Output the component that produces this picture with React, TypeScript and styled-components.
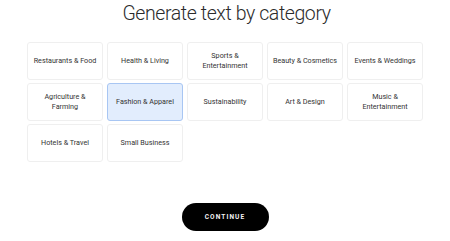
import styled, { createGlobalStyle } from "styled-components";

const GlobalStyle = createGlobalStyle`
  html, body {
    margin: 0;
    padding: 0;
    background: #ffffff;
  }
  body {
    font-family: Roboto, "Liberation Sans", sans-serif;
  }
`;

const Page = styled.div`
  width: 450px;
  height: 241px;
  display: flex;
  flex-direction: column;
  align-items: center;
  overflow: hidden;
`;

const Title = styled.h1`
  margin: 0;
  padding-top: 2px;
  padding-left: 3px;
  font-size: 19.5px;
  font-weight: 300;
  line-height: 24px;
  letter-spacing: -0.4px;
  color: #2b2b2b;
  text-align: center;
`;

const Grid = styled.div`
  margin-top: 16px;
  display: grid;
  grid-template-columns: repeat(5, 76px);
  grid-auto-rows: 38px;
  column-gap: 4px;
  row-gap: 3px;
`;

const Card = styled.button<{ $selected?: boolean }>`
  box-sizing: border-box;
  display: flex;
  align-items: center;
  justify-content: center;
  padding: 0 4px;
  border-radius: 3px;
  border: 1px solid ${({ $selected }) => ($selected ? "#a8c6f3" : "#efefef")};
  background: ${({ $selected }) => ($selected ? "#e2edfd" : "#ffffff")};
  font-family: Roboto, "Liberation Sans", sans-serif;
  font-size: 7.2px;
  line-height: 10px;
  color: #333333;
  text-align: center;
  cursor: pointer;
`;

const Continue = styled.button`
  margin-top: 41px;
  width: 87px;
  height: 28px;
  border: none;
  border-radius: 14px;
  background: #000000;
  color: #f2f2f2;
  font-family: Roboto, "Liberation Sans", sans-serif;
  font-size: 6.5px;
  font-weight: 700;
  letter-spacing: 1.1px;
  cursor: pointer;
`;

const categories = [
  "Restaurants & Food",
  "Health & Living",
  "Sports & Entertainment",
  "Beauty & Cosmetics",
  "Events & Weddings",
  "Agriculture & Farming",
  "Fashion & Apparel",
  "Sustainability",
  "Art & Design",
  "Music & Entertainment",
  "Hotels & Travel",
  "Small Business",
];

export default function App() {
  return (
    <>
      <GlobalStyle />
      <Page>
        <Title>Generate text by category</Title>
        <Grid>
          {categories.map((c) => (
            <Card key={c} $selected={c === "Fashion & Apparel"}>
              {c}
            </Card>
          ))}
        </Grid>
        <Continue>CONTINUE</Continue>
      </Page>
    </>
  );
}
